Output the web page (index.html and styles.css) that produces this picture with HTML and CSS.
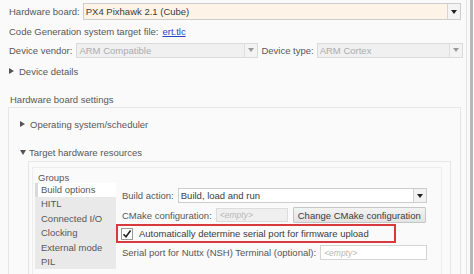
FILE: index.html
```html
<!DOCTYPE html>
<html lang="en">
<head>
    <meta charset="UTF-8">
    <title>Hardware Implementation</title>
    <link rel="stylesheet" href="styles.css">
</head>
<body>
<div class="page">
    <div class="main">
        <div class="row r1">
            <span class="lbl">Hardware board:</span>
            <div class="combo board">
                <span class="val">PX4 Pixhawk 2.1 (Cube)</span>
                <span class="drop"><i class="arrow"></i></span>
            </div>
        </div>

        <div class="row r2">
            <span class="lbl">Code Generation system target file:</span>
            <a href="#" class="link">ert.tlc</a>
        </div>

        <div class="row r3">
            <span class="lbl">Device vendor:</span>
            <div class="combo off vendor">
                <span class="val">ARM Compatible</span>
                <span class="drop"><i class="arrow"></i></span>
            </div>
            <span class="lbl type-lbl">Device type:</span>
            <div class="combo off dtype">
                <span class="val">ARM Cortex</span>
                <span class="drop"><i class="arrow"></i></span>
            </div>
        </div>

        <div class="row r4 toggle"><i class="tri right"></i>Device details</div>

        <div class="section-title">Hardware board settings</div>

        <div class="panel outer">
            <div class="toggle os"><i class="tri right"></i>Operating system/scheduler</div>
            <div class="toggle thr"><i class="tri down"></i>Target hardware resources</div>

            <div class="panel inner">
                <div class="panel inner2">
                    <div class="groups-title">Groups</div>
                    <div class="groups">
                        <ul class="group-list">
                            <li class="active">Build options</li>
                            <li>HITL</li>
                            <li>Connected I/O</li>
                            <li>Clocking</li>
                            <li>External mode</li>
                            <li>PIL</li>
                        </ul>

                        <div class="group-form">
                            <div class="frow fa">
                                <span class="lbl">Build action:</span>
                                <div class="combo action">
                                    <span class="val">Build, load and run</span>
                                    <span class="drop"><i class="arrow"></i></span>
                                </div>
                            </div>
                            <div class="frow fb">
                                <span class="lbl">CMake configuration:</span>
                                <div class="field off cmake"><em>&lt;empty&gt;</em></div>
                                <button class="btn">Change CMake configuration</button>
                            </div>
                            <div class="highlight">
                                <span class="check">
                                    <svg width="10" height="10" viewBox="0 0 10 10"><path d="M1.5 5.2 L4 7.8 L8.6 1.6" fill="none" stroke="#222" stroke-width="1.6"/></svg>
                                </span>
                                <span class="lbl">Automatically determine serial port for firmware upload</span>
                            </div>
                            <div class="frow fd">
                                <span class="lbl">Serial port for Nuttx (NSH) Terminal (optional):</span>
                                <div class="field serial"><em>&lt;empty&gt;</em></div>
                            </div>
                        </div>
                    </div>
                </div>
            </div>
        </div>
    </div>
    <div class="scrollbar"></div>
</div>
</body>
</html>
```

FILE: styles.css
```css
* {
    box-sizing: border-box;
}

body {
    margin: 0;
    width: 474px;
    height: 274px;
    overflow: hidden;
    background: #fafafa;
    font-family: 'Liberation Sans', Arial, sans-serif;
    font-size: 9.5px;
    color: #575757;
}

.page {
    display: flex;
    height: 274px;
}

.main {
    flex: 1;
    padding-left: 9px;
}

.scrollbar {
    width: 8px;
    border-left: 1px solid #e4e4e4;
}

.scrollbar::after {
    content: "";
    display: block;
    margin-left: 3px;
    width: 3px;
    height: 100%;
    background: #b8b8b8;
}

.row {
    display: flex;
    align-items: center;
    height: 16px;
    white-space: nowrap;
}

.r1 {
    margin-top: 3px;
    height: 17px;
}

.r2 {
    margin-top: 3px;
}

.r3 {
    margin-top: 3px;
}

.r4 {
    margin-top: 5px;
}

.combo {
    display: flex;
    align-items: stretch;
    height: 100%;
    border: 1px solid #cdcdcd;
    background: #fff;
    color: #3c3c3c;
}

.combo .val {
    flex: 1;
    display: flex;
    align-items: center;
    padding-left: 2px;
}

.combo .drop {
    width: 13px;
    display: flex;
    align-items: center;
    justify-content: center;
    border-left: 1px solid #d4d4d4;
    background: #f2f2f2;
}

.arrow {
    width: 0;
    height: 0;
    border-left: 3px solid transparent;
    border-right: 3px solid transparent;
    border-top: 4px solid #222;
}

.board {
    margin-left: 3px;
    width: 378px;
    background: #fdf3e7;
}

.board .drop {
    background: #f4f4f4;
}

.combo.off {
    height: 15px;
    background: #f0f0f0;
    border-color: #dadada;
    color: #acacac;
}

.combo.off .arrow {
    border-top-color: #999;
}

.combo.off .drop {
    background: #f3f3f3;
    border-left-color: #dedede;
}

.vendor {
    margin-left: 4px;
    width: 182px;
}

.type-lbl {
    margin-left: 3px;
}

.dtype {
    margin-left: 3px;
    width: 146px;
}

.link {
    margin-left: 4px;
    color: #2744c8;
    text-decoration: underline;
}

.toggle {
    display: flex;
    align-items: center;
    white-space: nowrap;
}

.tri {
    display: inline-block;
    width: 0;
    height: 0;
    margin-right: 5px;
}

.tri.right {
    border-top: 3px solid transparent;
    border-bottom: 3px solid transparent;
    border-left: 5px solid #555;
}

.tri.down {
    border-left: 3px solid transparent;
    border-right: 3px solid transparent;
    border-top: 5px solid #555;
    margin-right: 3px;
}

.section-title {
    margin-top: 15px;
    padding-left: 1px;
    line-height: 12px;
    height: 12px;
}

.panel {
    border: 1px solid #e6e6e6;
    border-bottom: none;
}

.outer {
    margin-top: 1px;
    margin-left: -1px;
    width: 453px;
    height: 170px;
    padding-left: 11px;
}

.os {
    margin-top: 8px;
    height: 16px;
}

.thr {
    margin-top: 13px;
    height: 15px;
}

.inner {
    margin-top: 1px;
    margin-left: 8px;
    width: 423px;
    height: 120px;
    padding: 5px 8px 0 3px;
}

.inner2 {
    border-color: #ededed;
    height: 110px;
    padding-left: 1px;
}

.groups-title {
    margin-top: 4px;
    padding-left: 4px;
    line-height: 11px;
    height: 11px;
}

.groups {
    display: flex;
}

.group-list {
    list-style: none;
    margin: 0 0 0 1px;
    padding: 0;
    width: 81px;
    background: #e9e9e9;
}

.group-list li {
    height: 14.4px;
    line-height: 14.4px;
    padding-left: 6px;
    white-space: nowrap;
}

.group-list li.active {
    background: #fff;
    border-left: 3px solid #d9d9d9;
    padding-left: 3px;
}

.group-form {
    padding-top: 5px;
}

.frow {
    display: flex;
    align-items: center;
    padding-left: 6px;
    white-space: nowrap;
}

.fa {
    height: 15px;
}

.action {
    margin-left: 4px;
    width: 249px;
}

.fb {
    margin-top: 4px;
    height: 16px;
}

.field {
    height: 14px;
    border: 1px solid #d4d4d4;
    background: #fff;
    display: flex;
    align-items: center;
    padding-left: 3px;
    color: #b8b8b8;
}

.field.off {
    background: #efefef;
    border-color: #dcdcdc;
}

.field em {
    font-size: 8.5px;
}

.cmake {
    margin-left: 4px;
    width: 72px;
}

.btn {
    margin-left: 5px;
    width: 133px;
    height: 16px;
    padding: 0;
    border: 1px solid #c6c6c6;
    border-radius: 1px;
    background: linear-gradient(#f3f3f3, #e3e3e3);
    font-family: 'Liberation Sans', Arial, sans-serif;
    font-size: 9.5px;
    color: #3c3c3c;
}

.highlight {
    margin-top: 1px;
    width: 280px;
    height: 19px;
    border: 2px solid #d8393d;
    display: flex;
    align-items: center;
    padding-left: 3px;
    white-space: nowrap;
    color: #3c3c3c;
}

.check {
    width: 12px;
    height: 12px;
    border: 1px solid #9a9a9a;
    background: #fff;
    display: flex;
    align-items: center;
    justify-content: center;
    margin-right: 6px;
}

.fd {
    margin-top: 2px;
    height: 15px;
}

.serial {
    margin-left: 4px;
    width: 107px;
    height: 15px;
}
```
